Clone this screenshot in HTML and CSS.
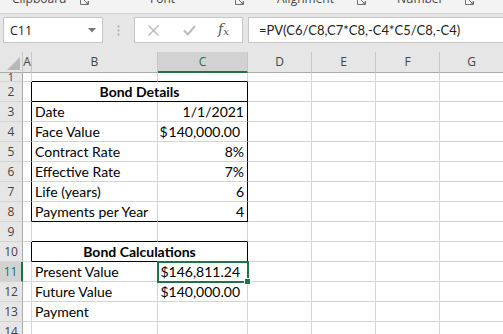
FILE: index.html
```html
<!DOCTYPE html>
<html lang="en">
<head>
    <meta charset="UTF-8">
    <title>Bond Worksheet</title>
    <link rel="stylesheet" href="styles.css">
</head>
<body>
    <div class="ribbon">
        <span class="group-label">Clipboard</span>
        <span class="launcher"><svg width="9" height="9" viewBox="0 0 9 9"><path d="M0.5 4V0.5H4M0.5 0.5V8.5H8.5V5M3.5 3.5L8 8M8 5.5V8H5.5" fill="none" stroke="#707070"/></svg></span>
        <span class="group-label">Font</span>
        <span class="launcher"><svg width="9" height="9" viewBox="0 0 9 9"><path d="M0.5 4V0.5H4M0.5 0.5V8.5H8.5V5M3.5 3.5L8 8M8 5.5V8H5.5" fill="none" stroke="#707070"/></svg></span>
        <span class="group-label">Alignment</span>
        <span class="launcher"><svg width="9" height="9" viewBox="0 0 9 9"><path d="M0.5 4V0.5H4M0.5 0.5V8.5H8.5V5M3.5 3.5L8 8M8 5.5V8H5.5" fill="none" stroke="#707070"/></svg></span>
        <span class="group-label">Number</span>
        <span class="launcher"><svg width="9" height="9" viewBox="0 0 9 9"><path d="M0.5 4V0.5H4M0.5 0.5V8.5H8.5V5M3.5 3.5L8 8M8 5.5V8H5.5" fill="none" stroke="#707070"/></svg></span>
    </div>

    <div class="formula-bar">
        <div class="name-box">
            <span>C11</span>
            <svg width="8" height="5" viewBox="0 0 8 5"><path d="M0 0H8L4 4.5Z" fill="#777"/></svg>
        </div>
        <div class="grip">
            <svg width="3" height="11" viewBox="0 0 3 11"><circle cx="1.5" cy="1.5" r="1" fill="#a6a6a6"/><circle cx="1.5" cy="5.5" r="1" fill="#a6a6a6"/><circle cx="1.5" cy="9.5" r="1" fill="#a6a6a6"/></svg>
        </div>
        <div class="fx-buttons">
            <svg class="fx-icon" width="13" height="11" viewBox="0 0 13 11"><path d="M1.5 0.5L11.5 10.5M11.5 0.5L1.5 10.5" stroke="#bcbcbc" stroke-width="1.5" fill="none"/></svg>
            <svg class="fx-icon" width="13" height="11" viewBox="0 0 13 11"><path d="M1 5.5L4.8 9.5L12 1" stroke="#bcbcbc" stroke-width="2" fill="none"/></svg>
            <span class="fx-icon fx-text">f<sub>x</sub></span>
        </div>
        <div class="formula-input">=PV(C6/C8,C7*C8,-C4*C5/C8,-C4)</div>
    </div>

    <div class="sheet">
        <!-- column headers -->
        <div class="c ch corner"><svg width="23" height="20" viewBox="0 0 23 20"><path d="M7 18L20 5V18Z" fill="#b8b8b8"/></svg></div>
        <div class="c ch">A</div>
        <div class="c ch">B</div>
        <div class="c ch sel">C</div>
        <div class="c ch">D</div>
        <div class="c ch">E</div>
        <div class="c ch">F</div>
        <div class="c ch">G</div>

        <!-- row 1 -->
        <div class="c rh short">1</div>
        <div class="c"></div>
        <div class="c bb"></div>
        <div class="c bb"></div>
        <div class="c"></div><div class="c"></div><div class="c"></div><div class="c"></div>

        <!-- row 2 -->
        <div class="c rh">2</div>
        <div class="c br"></div>
        <div class="c span2 bb br title">Bond Details</div>
        <div class="c"></div><div class="c"></div><div class="c"></div><div class="c"></div>

        <!-- row 3 -->
        <div class="c rh">3</div>
        <div class="c br"></div>
        <div class="c txt">Date</div>
        <div class="c br num">1/1/2021</div>
        <div class="c"></div><div class="c"></div><div class="c"></div><div class="c"></div>

        <!-- row 4 -->
        <div class="c rh">4</div>
        <div class="c br"></div>
        <div class="c txt">Face Value</div>
        <div class="c br num cur">$&#8202;140,000.00</div>
        <div class="c"></div><div class="c"></div><div class="c"></div><div class="c"></div>

        <!-- row 5 -->
        <div class="c rh">5</div>
        <div class="c br"></div>
        <div class="c txt">Contract Rate</div>
        <div class="c br num">8%</div>
        <div class="c"></div><div class="c"></div><div class="c"></div><div class="c"></div>

        <!-- row 6 -->
        <div class="c rh">6</div>
        <div class="c br"></div>
        <div class="c txt">Effective Rate</div>
        <div class="c br num">7%</div>
        <div class="c"></div><div class="c"></div><div class="c"></div><div class="c"></div>

        <!-- row 7 -->
        <div class="c rh">7</div>
        <div class="c br"></div>
        <div class="c txt">Life (years)</div>
        <div class="c br num">6</div>
        <div class="c"></div><div class="c"></div><div class="c"></div><div class="c"></div>

        <!-- row 8 -->
        <div class="c rh">8</div>
        <div class="c br"></div>
        <div class="c bb txt">Payments per Year</div>
        <div class="c bb br num">4</div>
        <div class="c"></div><div class="c"></div><div class="c"></div><div class="c"></div>

        <!-- row 9 -->
        <div class="c rh">9</div>
        <div class="c"></div>
        <div class="c bb"></div>
        <div class="c bb"></div>
        <div class="c"></div><div class="c"></div><div class="c"></div><div class="c"></div>

        <!-- row 10 -->
        <div class="c rh">10</div>
        <div class="c br"></div>
        <div class="c span2 bb br title">Bond Calculations</div>
        <div class="c"></div><div class="c"></div><div class="c"></div><div class="c"></div>

        <!-- row 11 -->
        <div class="c rh sel">11</div>
        <div class="c"></div>
        <div class="c txt">Present Value</div>
        <div class="c num cur active">$146,811.24</div>
        <div class="c"></div><div class="c"></div><div class="c"></div><div class="c"></div>

        <!-- row 12 -->
        <div class="c rh">12</div>
        <div class="c"></div>
        <div class="c txt">Future Value</div>
        <div class="c num cur">$140,000.00</div>
        <div class="c"></div><div class="c"></div><div class="c"></div><div class="c"></div>

        <!-- row 13 -->
        <div class="c rh">13</div>
        <div class="c"></div>
        <div class="c txt">Payment</div>
        <div class="c"></div>
        <div class="c"></div><div class="c"></div><div class="c"></div><div class="c"></div>

        <!-- row 14 -->
        <div class="c rh">14</div>
        <div class="c"></div>
        <div class="c"></div>
        <div class="c"></div>
        <div class="c"></div><div class="c"></div><div class="c"></div><div class="c"></div>
    </div>
</body>
</html>
```

FILE: styles.css
```css
body {
    margin: 0;
    width: 503px;
    height: 334px;
    overflow: hidden;
    font-family: Lato, "Liberation Sans", sans-serif;
    background-color: #e6e6e6;
}

/* ribbon group labels, mostly scrolled out of view */
.ribbon {
    height: 13px;
    border-bottom: 1px solid #d4d4d4;
    background-color: #f3f3f3;
    overflow: hidden;
    display: grid;
    grid-template-columns: 68px 70px 85px 42px 80px 40px 68px auto;
    padding-left: 12px;
    font-family: "Open Sans", "Noto Sans", sans-serif;
    font-size: 12px;
    color: #444;
}
.group-label {
    line-height: 12px;
    margin-top: -7px;
}
.launcher svg {
    display: block;
    margin-top: -4px;
}

/* name box + formula */
.formula-bar {
    height: 38px;
    box-sizing: border-box;
    padding-top: 3px;
    display: flex;
    align-items: flex-start;
}
.name-box {
    margin-left: 3px;
    width: 100px;
    height: 26px;
    box-sizing: border-box;
    border: 1px solid #c6c6c6;
    background-color: white;
    display: flex;
    align-items: center;
    justify-content: space-between;
    padding: 0 6px 0 6px;
    font-family: "Open Sans", "Noto Sans", sans-serif;
    font-size: 12.5px;
    color: #222;
}
.grip {
    width: 31px;
    height: 26px;
    display: flex;
    align-items: center;
    justify-content: center;
}
.fx-buttons {
    width: 109px;
    height: 26px;
    box-sizing: border-box;
    border: 1px solid #c6c6c6;
    background-color: white;
    display: flex;
    align-items: center;
    padding-left: 12px;
    gap: 23px;
}
.fx-icon {
    flex: none;
}
.fx-text {
    font-family: "DejaVu Serif", "Liberation Serif", serif;
    font-style: italic;
    font-size: 14px;
    color: #555;
    line-height: 14px;
    margin-left: -1px;
}
.fx-text sub {
    font-size: 10px;
    vertical-align: -1px;
}
.formula-input {
    flex: 1;
    margin-left: 5px;
    height: 26px;
    box-sizing: border-box;
    border: 1px solid #c6c6c6;
    border-right: none;
    background-color: white;
    padding-left: 10px;
    line-height: 24px;
    font-size: 13px;
    color: #222;
    white-space: nowrap;
    overflow: hidden;
}

/* worksheet grid */
.sheet {
    display: grid;
    grid-template-columns: 23px 9px 126px 90px 64px 64px 64px 64px;
    grid-template-rows: 21px 9px repeat(13, 20px);
    height: 282px;
    overflow: hidden;
    background-color: white;
    font-size: 14px;
}
.c {
    box-sizing: border-box;
    border-right: 1px solid #d4d4d4;
    border-bottom: 1px solid #d4d4d4;
    line-height: 19px;
    white-space: nowrap;
    overflow: hidden;
}
.ch, .rh {
    background-color: #e6e6e6;
    font-family: "Open Sans", "Noto Sans", sans-serif;
    font-size: 12px;
    color: #444;
    text-align: center;
}
.ch {
    border-right-color: #c6c6c6;
    border-bottom-color: #ababab;
    line-height: 20px;
}
.rh {
    border-right-color: #ababab;
    border-bottom-color: #d4d4d4;
}
.corner svg {
    display: block;
}
.ch.sel {
    background-color: #d2d2d2;
    color: #217346;
    border-bottom: 2px solid #217346;
}
.rh.sel {
    background-color: #d2d2d2;
    color: #217346;
    border-right: 2px solid #217346;
}
.short {
    line-height: 8px;
    font-size: 11px;
}

.bb { border-bottom-color: #000; }
.br { border-right-color: #000; }
.span2 { grid-column: span 2; }

.title {
    font-weight: bold;
    text-align: center;
}
.txt {
    padding-left: 3px;
}
.num {
    text-align: right;
    padding-right: 3px;
}
.cur {
    padding-right: 7px;
}
.active {
    position: relative;
    z-index: 1;
    overflow: visible;
    outline: 2px solid #217346;
    outline-offset: -1px;
}
.active::after {
    content: "";
    position: absolute;
    right: -4px;
    bottom: -4px;
    width: 5px;
    height: 5px;
    background-color: #217346;
    border: 1px solid white;
}
```
